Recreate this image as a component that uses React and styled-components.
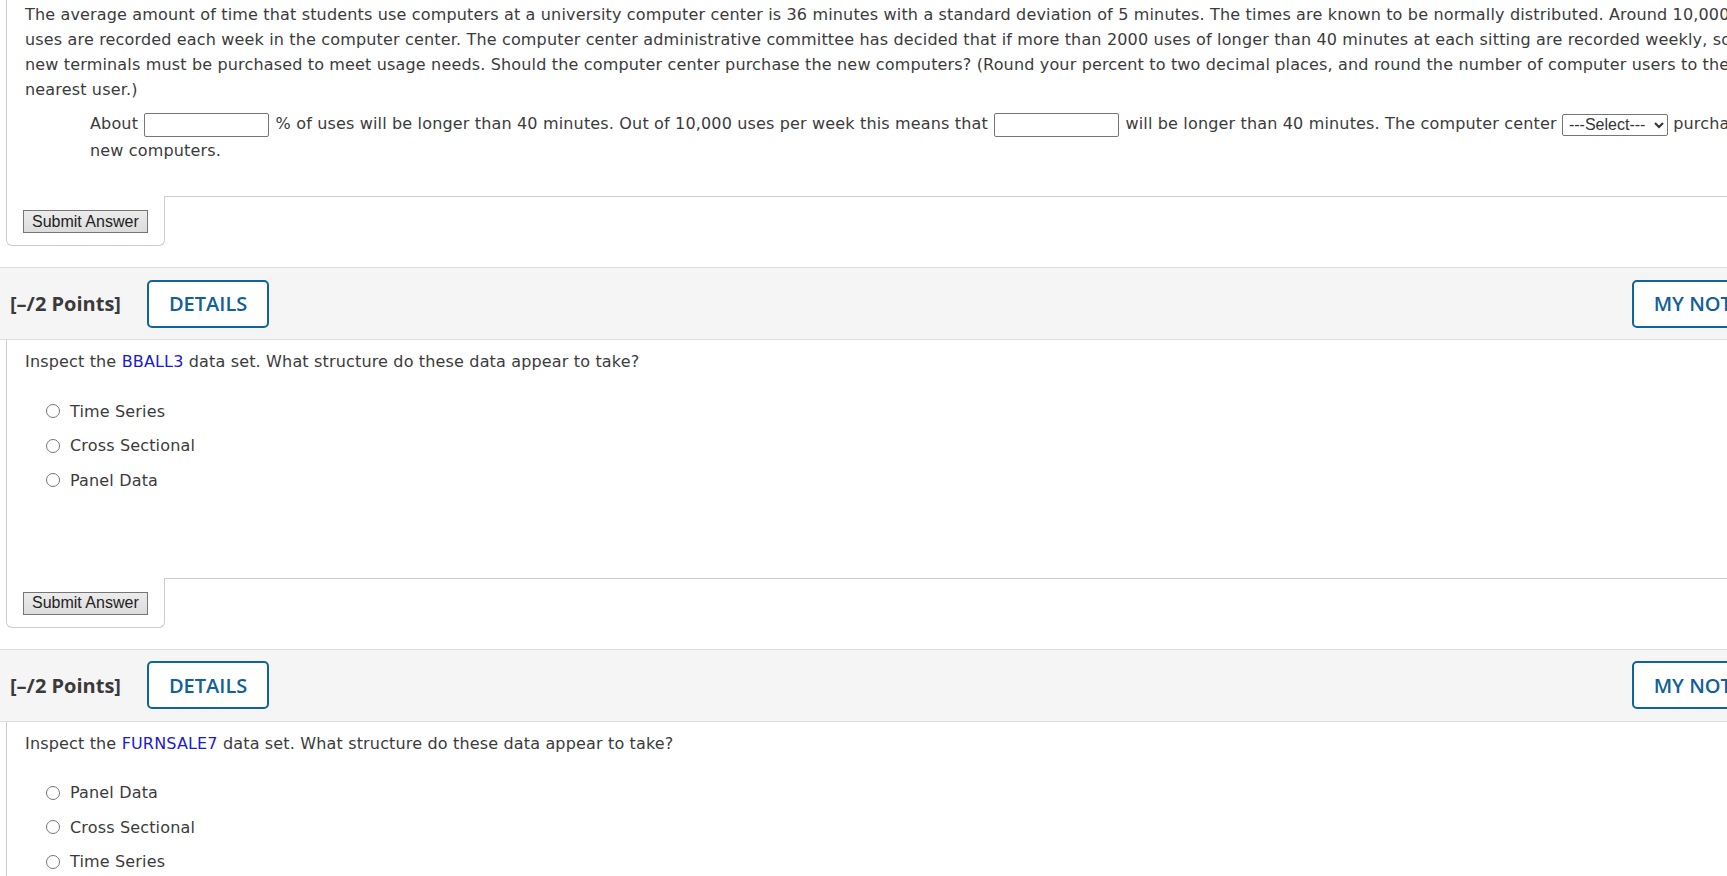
import React from 'react';
import styled, { createGlobalStyle } from 'styled-components';

const GlobalStyle = createGlobalStyle`
    body {
        margin: 0;
        overflow: hidden;
        background: #fff;
    }
`;

const Page = styled.div`
    width: 1780px;
    font-family: "DejaVu Sans", Verdana, sans-serif;
    font-size: 16px;
    letter-spacing: 0.16px;
    color: #3b3b3b;
`;

const Card = styled.section`
    margin-left: 6px;
`;

const Body = styled.div`
    border-left: 1px solid #ccc;
    padding: ${(p) => p.$top}px 14px ${(p) => p.$bottom}px 18px;
`;

const Para = styled.p`
    margin: 0;
    line-height: 25px;
`;

const DataLink = styled.a`
    color: #1a1ad0;
    text-decoration: none;
`;

const AnswerBlock = styled.div`
    margin: 8px 0 0 65px;
    line-height: 27px;
`;

const Blank = styled.input`
    box-sizing: border-box;
    width: 125px;
    height: 24px;
    border: 1px solid #767676;
    border-radius: 2px;
    vertical-align: middle;
    margin: 0 1px;
`;

const Choice = styled.select`
    box-sizing: border-box;
    width: 106px;
    height: 22px;
    font-family: "Liberation Sans", Arial, sans-serif;
    font-size: 16px;
    letter-spacing: 0;
    color: #333;
    border: 1px solid #767676;
    border-radius: 2px;
    background: #fff;
    vertical-align: middle;
    padding: 0 2px;
`;

const RadioList = styled.div`
    margin-top: 20px;
`;

const RadioRow = styled.label`
    display: flex;
    align-items: center;
    gap: 10px;
    height: 34.5px;
    padding-left: 21px;
`;

const Radio = styled.input`
    appearance: none;
    box-sizing: border-box;
    width: 14px;
    height: 14px;
    margin: 0;
    border: 1px solid #767676;
    border-radius: 50%;
    background: #fff;
`;

const Footer = styled.div`
    display: flex;
`;

const Tab = styled.div`
    padding: 14px 16px 12px;
    border: 1px solid #ccc;
    border-top: none;
    border-radius: 0 0 6px 6px;
`;

const Filler = styled.div`
    flex: 1;
    border-top: 1px solid #ccc;
`;

const SubmitBtn = styled.button`
    box-sizing: border-box;
    height: 23px;
    padding: 0 8px;
    font-family: "Liberation Sans", Arial, sans-serif;
    font-size: 16px;
    color: #222;
    background: linear-gradient(#ececec, #dcdcdc);
    border: 1px solid #767676;
    border-radius: 0;
    display: block;
`;

const Bar = styled.div`
    box-sizing: border-box;
    margin-top: 21px;
    height: 73px;
    display: flex;
    align-items: center;
    padding: 0 4px 0 10px;
    background: #f5f5f5;
    border-top: 1px solid #ddd;
    border-bottom: 1px solid #ddd;
    font-family: "Open Sans", "Noto Sans", sans-serif;
    letter-spacing: 0;
`;

const Points = styled.span`
    font-size: 20px;
    font-weight: 700;
    color: #3a3a3a;
    margin-right: 26px;
`;

const OutlineBtn = styled.button`
    box-sizing: border-box;
    height: 48px;
    padding: 0 20px;
    margin-left: ${(p) => (p.$right ? 'auto' : '0')};
    font-family: "Open Sans", "Noto Sans", sans-serif;
    font-size: 20px;
    font-weight: 600;
    color: #10609a;
    background: #fff;
    border: 2px solid #10649e;
    border-radius: 5px;
`;

const HeaderBar = () => (
    <Bar>
        <Points>[–/2 Points]</Points>
        <OutlineBtn>DETAILS</OutlineBtn>
        <OutlineBtn $right>MY NOTES</OutlineBtn>
    </Bar>
);

const SubmitFooter = () => (
    <Footer>
        <Tab>
            <SubmitBtn>Submit Answer</SubmitBtn>
        </Tab>
        <Filler />
    </Footer>
);

const StructureQuestion = ({ name, dataset, options }) => (
    <Card>
        <Body $top={9} $bottom={80}>
            <Para>
                Inspect the <DataLink href="#">{dataset}</DataLink> data set. What structure do these data appear to take?
            </Para>
            <RadioList>
                {options.map((o) => (
                    <RadioRow key={o}>
                        <Radio type="radio" name={name} />
                        {o}
                    </RadioRow>
                ))}
            </RadioList>
        </Body>
        <SubmitFooter />
    </Card>
);

const App = () => {
    return (
        <Page>
            <GlobalStyle />
            <Card>
                <Body $top={2} $bottom={32}>
                    <Para>
                        The average amount of time that students use computers at a university computer center is 36 minutes with a standard deviation of 5 minutes. The times are known to be normally distributed. Around 10,000 uses are recorded each week in the computer center. The computer center administrative committee has decided that if more than 2000 uses of longer than 40 minutes at each sitting are recorded weekly, so new terminals must be purchased to meet usage needs. Should the computer center purchase the new computers? (Round your percent to two decimal places, and round the number of computer users to the nearest user.)
                    </Para>
                    <AnswerBlock>
                        About <Blank type="text" /> % of uses will be longer than 40 minutes. Out of 10,000 uses per week this means that <Blank type="text" /> will be longer than 40 minutes. The computer center{' '}
                        <Choice defaultValue="">
                            <option value="">---Select---</option>
                            <option value="should">should</option>
                            <option value="not">should not</option>
                        </Choice>{' '}
                        purchase new computers.
                    </AnswerBlock>
                </Body>
                <SubmitFooter />
            </Card>
            <HeaderBar />
            <StructureQuestion name="q2" dataset="BBALL3" options={['Time Series', 'Cross Sectional', 'Panel Data']} />
            <HeaderBar />
            <StructureQuestion name="q3" dataset="FURNSALE7" options={['Panel Data', 'Cross Sectional', 'Time Series']} />
        </Page>
    );
};

export default App;
